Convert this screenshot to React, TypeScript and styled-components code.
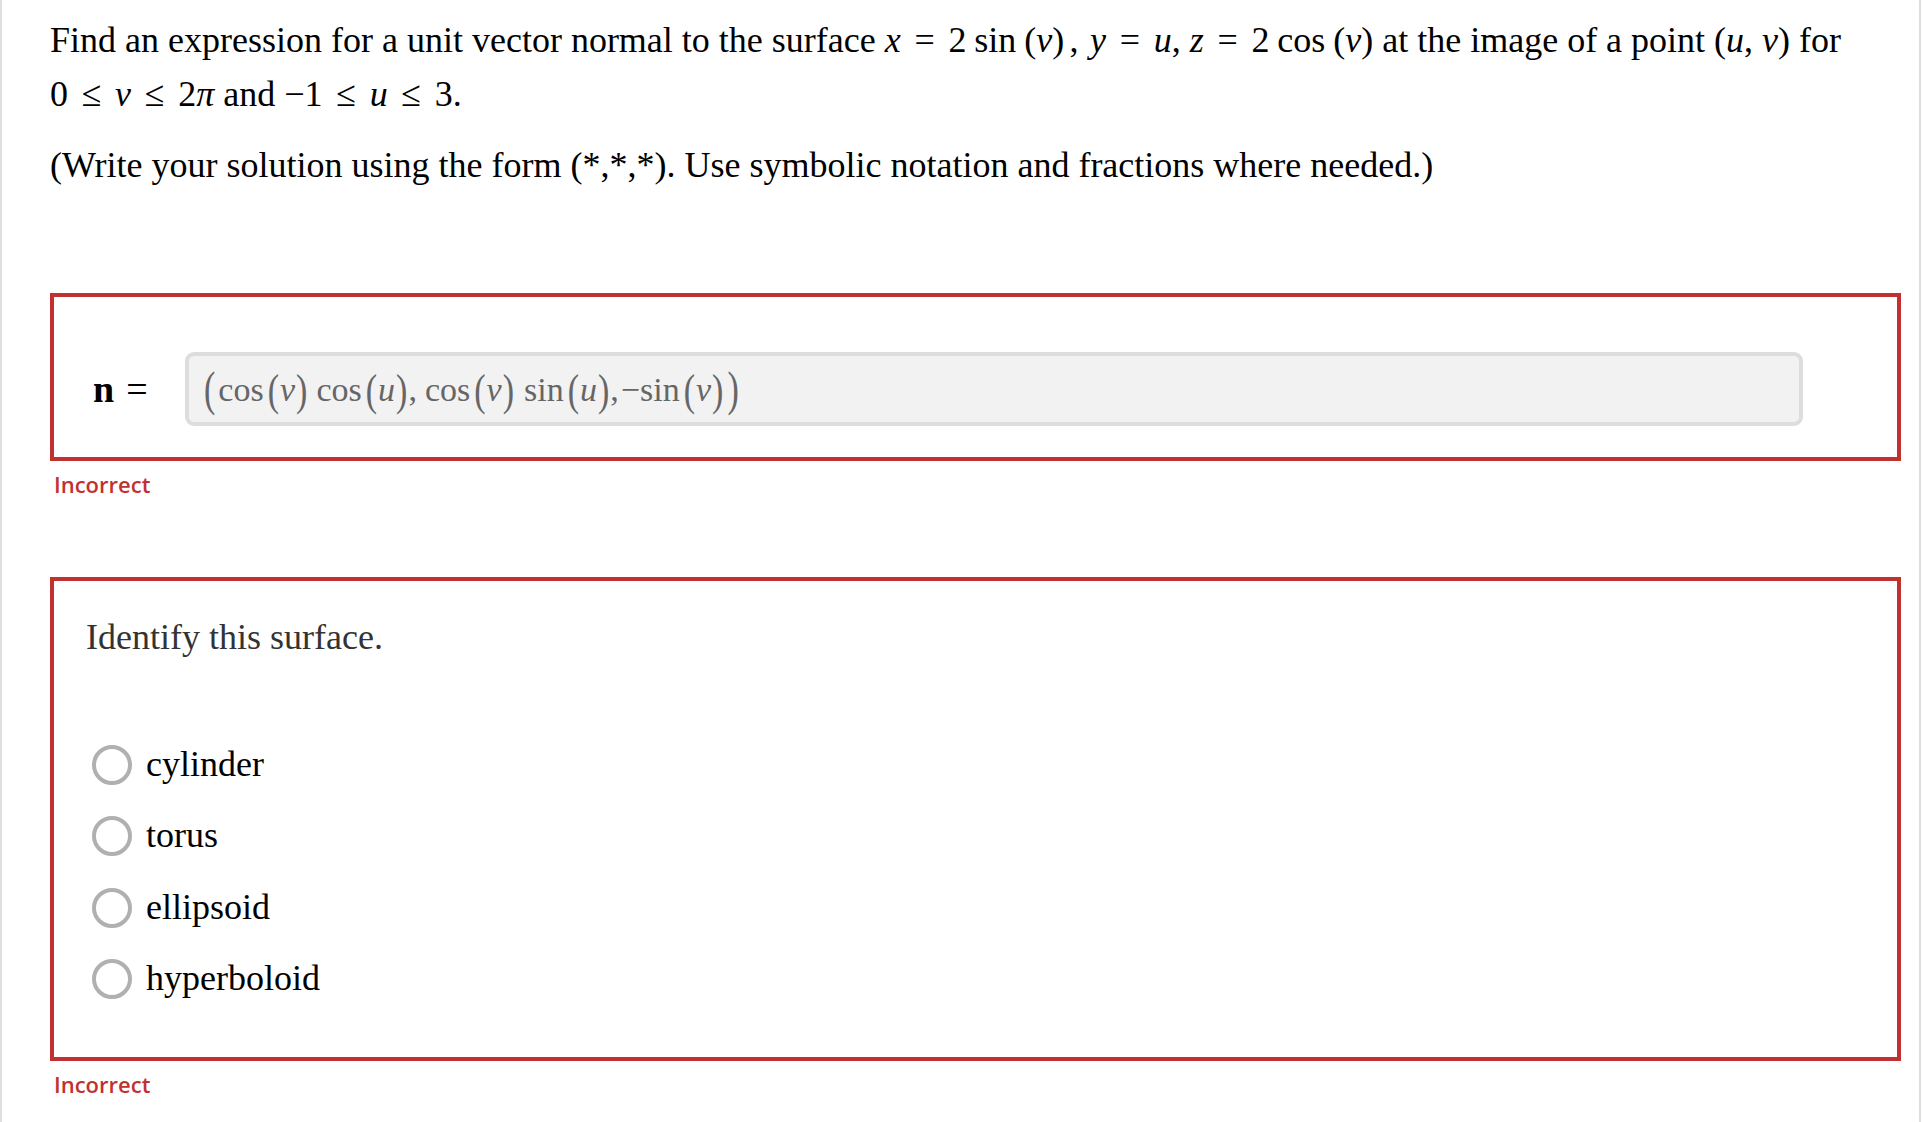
import styled, { createGlobalStyle } from "styled-components";

const GlobalStyle = createGlobalStyle`
  html, body {
    margin: 0;
    padding: 0;
    background: #fff;
  }
  body {
    font-family: "Liberation Serif", "Times New Roman", serif;
    color: #000;
  }
`;

const Page = styled.div`
  box-sizing: border-box;
  width: 1921px;
  min-height: 1122px;
  border-left: 2px solid #dedede;
  border-right: 2px solid #dedede;
  padding: 13px 18px 0 48px;
`;

const Question = styled.p`
  margin: 0;
  font-size: 36px;
  line-height: 54px;
`;

const Line = styled.span`
  display: block;
  white-space: nowrap;
`;

const Instruction = styled(Question)`
  margin-top: 17px;
`;

const V = styled.i`
  font-style: italic;
`;

const Rel = styled.span`
  margin: 0 0.38em;
`;

const Fn = styled.span`
  margin: 0 0.22em;
`;

const Comma = styled.span`
  margin: 0 0.32em 0 0.15em;
`;

const AnswerBox = styled.div`
  box-sizing: border-box;
  margin-top: 101px;
  height: 168px;
  border: 4px solid #c1312f;
  display: flex;
  align-items: flex-start;
  padding: 55px 0 0 39px;
`;

const NLabel = styled.div`
  height: 74px;
  display: flex;
  align-items: center;
  font-size: 38px;
  width: 92px;

  b {
    font-weight: bold;
  }
  span {
    margin-left: 12px;
  }
`;

const Field = styled.div`
  box-sizing: border-box;
  width: 1618px;
  height: 74px;
  border: 4px solid #dddddd;
  border-radius: 9px;
  background: #f2f2f2;
  display: flex;
  align-items: center;
  padding-left: 12px;
  padding-top: 2px;
`;

const AnswerMath = styled.span`
  font-size: 34px;
  color: #666;
  white-space: nowrap;
  display: inline-flex;
  align-items: center;
`;

const Paren = styled.span<{ $outer?: boolean }>`
  display: inline-block;
  transform: scaleY(${(p) => (p.$outer ? 1.4 : 1.32)});
  margin: 0 ${(p) => (p.$outer ? "3px" : "1px")};
`;

const MathFn = styled.span<{ $gap?: number }>`
  margin-left: ${(p) => p.$gap ?? 0}px;
  margin-right: 3px;
`;

const MathVar = styled.i`
  font-style: italic;
`;

const Minus = styled.span`
  margin-left: 2px;
`;

const Feedback = styled.div`
  margin-top: 8px;
  padding-left: 4px;
  font-family: "Open Sans", "Noto Sans", sans-serif;
  font-weight: 600;
  font-size: 22px;
  line-height: 30px;
  color: #c1312f;
`;

const ChoiceBox = styled.div`
  box-sizing: border-box;
  margin-top: 78px;
  height: 484px;
  border: 4px solid #c1312f;
  padding: 34px 0 0 32px;
`;

const Prompt = styled.p`
  margin: 0;
  font-size: 36px;
  line-height: 44px;
  color: #333;
`;

const Options = styled.div`
  margin-top: 69px;
  margin-left: 6px;
  display: flex;
  flex-direction: column;
`;

const Option = styled.label`
  height: 71.5px;
  display: flex;
  align-items: center;
  gap: 14px;
  font-size: 36px;
  line-height: 44px;
  color: #000;
  cursor: pointer;
`;

const Radio = styled.span`
  box-sizing: border-box;
  width: 40px;
  height: 40px;
  border: 4px solid #b0b0b0;
  border-radius: 50%;
  background: #fff;
  margin-top: 2px;
  flex-shrink: 0;
`;

const choices = ["cylinder", "torus", "ellipsoid", "hyperboloid"];

function Answer() {
  return (
    <AnswerMath>
      <Paren $outer>(</Paren>
      <MathFn>cos</MathFn>
      <Paren>(</Paren>
      <MathVar>v</MathVar>
      <Paren>)</Paren>
      <MathFn $gap={8}>cos</MathFn>
      <Paren>(</Paren>
      <MathVar>u</MathVar>
      <Paren>)</Paren>
      <span>,</span>
      <MathFn $gap={8}>cos</MathFn>
      <Paren>(</Paren>
      <MathVar>v</MathVar>
      <Paren>)</Paren>
      <MathFn $gap={9}>sin</MathFn>
      <Paren>(</Paren>
      <MathVar>u</MathVar>
      <Paren>)</Paren>
      <span>,</span>
      <Minus>−</Minus>
      <MathFn>sin</MathFn>
      <Paren>(</Paren>
      <MathVar>v</MathVar>
      <Paren>)</Paren>
      <Paren $outer>)</Paren>
    </AnswerMath>
  );
}

export default function App() {
  return (
    <>
      <GlobalStyle />
      <Page>
        <Question>
          <Line>
            Find an expression for a unit vector normal to the surface <V>x</V>
            <Rel>=</Rel>2<Fn>sin</Fn>(<V>v</V>)<Comma>,</Comma>
            <V>y</V>
            <Rel>=</Rel>
            <V>u</V>, <V>z</V>
            <Rel>=</Rel>2<Fn>cos</Fn>(<V>v</V>) at the image of a point (<V>u</V>, <V>v</V>) for
          </Line>
          <Line>
            0<Rel>≤</Rel>
            <V>v</V>
            <Rel>≤</Rel>2<V>π</V> and −1<Rel>≤</Rel>
            <V>u</V>
            <Rel>≤</Rel>3.
          </Line>
        </Question>
        <Instruction>
          (Write your solution using the form (*,*,*). Use symbolic notation and fractions where needed.)
        </Instruction>

        <AnswerBox>
          <NLabel>
            <b>n</b>
            <span>=</span>
          </NLabel>
          <Field>
            <Answer />
          </Field>
        </AnswerBox>
        <Feedback>Incorrect</Feedback>

        <ChoiceBox>
          <Prompt>Identify this surface.</Prompt>
          <Options>
            {choices.map((c) => (
              <Option key={c}>
                <Radio />
                {c}
              </Option>
            ))}
          </Options>
        </ChoiceBox>
        <Feedback>Incorrect</Feedback>
      </Page>
    </>
  );
}
